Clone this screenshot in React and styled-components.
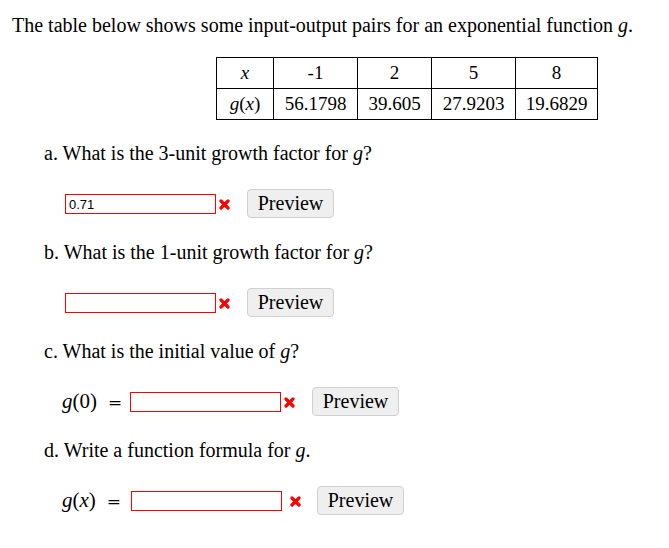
import React from 'react';
import styled, { createGlobalStyle } from 'styled-components';

const GlobalStyle = createGlobalStyle`
  html, body {
    margin: 0;
    padding: 0;
    background: #ffffff;
  }
  body {
    font-family: "Liberation Serif", "Times New Roman", serif;
    font-size: 20px;
    color: #000;
  }
`;

const Page = styled.div`
  padding: 13px 0 0 12px;
`;

const Intro = styled.div`
  line-height: 24px;
  white-space: nowrap;
`;

const M = styled.span`
  font-family: "Liberation Serif", "Times New Roman", serif;
  font-style: italic;
`;

const Equals = styled.span`
  font-family: "DejaVu Serif", serif;
  font-size: 17px;
  margin-left: 11px;
`;

const Table = styled.table`
  border-collapse: collapse;
  margin: 20px 0 0 204px;
  table-layout: fixed;
  font-size: 19px;
`;

const Cell = styled.td`
  border: 1px solid #000;
  height: 30px;
  padding: 0;
  text-align: center;
  vertical-align: middle;
  line-height: 20px;
  width: ${({ $w }) => $w}px;
`;

const Part = styled.div`
  padding-top: 21px;
`;

const Question = styled.div`
  margin-left: 32px;
  line-height: 24px;
`;

const AnswerRow = styled.div`
  display: flex;
  align-items: center;
  height: 29px;
  margin-top: 24px;
  margin-bottom: 1px;
  margin-left: ${({ $indent }) => $indent}px;
`;

const Label = styled.span`
  width: ${({ $w }) => $w}px;
  flex-shrink: 0;
  white-space: nowrap;
  font-size: 21px;
`;

const Input = styled.input`
  box-sizing: border-box;
  width: 151px;
  height: 20px;
  margin: 1px 0 0 0;
  padding: 0 3px;
  border: 1px solid #ff0000;
  border-radius: 0;
  outline: none;
  font-family: "Liberation Sans", Arial, sans-serif;
  font-size: 13px;
  color: #000;
  background: #fff;
`;

const Wrong = styled.svg`
  flex-shrink: 0;
  margin-left: ${({ $gap }) => $gap}px;
  margin-top: 1px;
`;

const PreviewButton = styled.button`
  box-sizing: border-box;
  height: 29px;
  width: 87px;
  margin-left: ${({ $gap }) => $gap}px;
  padding: 0;
  background: #efefef;
  border: 1px solid #d0d0d0;
  border-radius: 4px;
  font-family: "Liberation Serif", "Times New Roman", serif;
  font-size: 20px;
  color: #000;
`;

const Cross = ({ gap }) => (
  <Wrong $gap={gap} width="11" height="11" viewBox="0 0 11 11">
    <path d="M2 2 L9 9 M9 2 L2 9" stroke="#ff0000" strokeWidth="3.2" strokeLinecap="round" />
  </Wrong>
);

const Answer = ({ indent, label, labelWidth, value, crossGap = 3, buttonGap = 16 }) => (
  <AnswerRow $indent={indent}>
    {label && <Label $w={labelWidth}>{label}</Label>}
    <Input defaultValue={value} />
    <Cross gap={crossGap} />
    <PreviewButton $gap={buttonGap}>Preview</PreviewButton>
  </AnswerRow>
);

const g = <M>g</M>;

const cols = [
  { w: 56, x: <M>x</M>, y: <span><M>g</M>(<M>x</M>)</span> },
  { w: 83, x: '-1', y: '56.1798' },
  { w: 73, x: '2', y: '39.605' },
  { w: 83, x: '5', y: '27.9203' },
  { w: 81, x: '8', y: '19.6829' },
];

export default function App() {
  return (
    <Page>
      <GlobalStyle />
      <Intro>The table below shows some input-output pairs for an exponential function {g}.</Intro>
      <Table>
        <tbody>
          <tr>
            {cols.map((c, i) => (
              <Cell key={i} $w={c.w}>{c.x}</Cell>
            ))}
          </tr>
          <tr>
            {cols.map((c, i) => (
              <Cell key={i} $w={c.w}>{c.y}</Cell>
            ))}
          </tr>
        </tbody>
      </Table>

      <Part>
        <Question>a. What is the 3-unit growth factor for {g}?</Question>
        <Answer indent={53} value="0.71" buttonGap={17} />
      </Part>

      <Part>
        <Question>b. What is the 1-unit growth factor for {g}?</Question>
        <Answer indent={53} buttonGap={17} />
      </Part>

      <Part>
        <Question>c. What is the initial value of {g}?</Question>
        <Answer
          indent={50}
          labelWidth={68}
          label={<span><M>g</M>(0)<Equals>=</Equals></span>}
          buttonGap={17}
        />
      </Part>

      <Part>
        <Question>d. Write a function formula for {g}.</Question>
        <Answer
          indent={50}
          labelWidth={69}
          label={<span><M>g</M>(<M>x</M>)<Equals>=</Equals></span>}
          crossGap={8}
          buttonGap={16}
        />
      </Part>
    </Page>
  );
}
